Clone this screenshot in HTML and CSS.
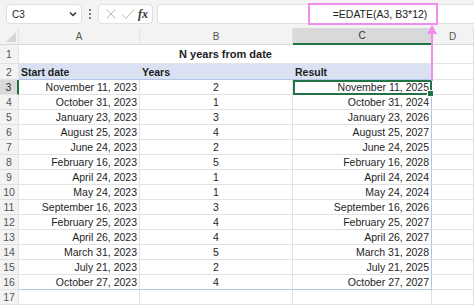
FILE: index.html
```html
<!DOCTYPE html>
<html>
<head>
<meta charset="utf-8">
<link rel="stylesheet" href="styles.css">
</head>
<body>
<div class="app">
  <div class="toolbar">
    <div class="namebox"><span>C3</span>
      <svg class="chev" width="8" height="6" viewBox="0 0 8 6"><path d="M1 1.5 L4 4.5 L7 1.5" fill="none" stroke="#333" stroke-width="1.4"/></svg>
    </div>
    <div class="dots"><i></i><i></i><i></i></div>
    <div class="fnbox">
      <svg width="12" height="12" viewBox="0 0 12 12"><path d="M1.5 1.5 L10.5 10.5 M10.5 1.5 L1.5 10.5" stroke="#b8b8b8" stroke-width="1"/></svg>
      <svg width="14" height="12" viewBox="0 0 14 12"><path d="M1 6.5 L5 10.5 L13 1.5" fill="none" stroke="#b8b8b8" stroke-width="1"/></svg>
      <span class="fx">fx</span>
    </div>
    <div class="formula">
      <div class="fhl">=EDATE(A3, B3*12)</div>
    </div>
  </div>
  <div class="sheet">
    <div class="hd corner"><svg width="10" height="10" viewBox="0 0 10 10"><path d="M10 0 L10 10 L0 10 Z" fill="#d6d6d6"/></svg></div>
    <div class="hd col">A</div>
    <div class="hd col">B</div>
    <div class="hd col sel">C</div>
    <div class="hd col">D</div>

    <div class="rh">1</div>
    <div class="title">N years from date</div>
    <div class="c"></div>

    <div class="rh">2</div>
    <div class="c th">Start date</div>
    <div class="c th">Years</div>
    <div class="c th last">Result</div>
    <div class="c"></div>

    <div class="rh sel">3</div>
    <div class="c d">November 11, 2023</div>
    <div class="c n">2</div>
    <div class="c d last cur">November 11, 2025</div>
    <div class="c"></div>

    <div class="rh">4</div>
    <div class="c d">October 31, 2023</div>
    <div class="c n">1</div>
    <div class="c d last">October 31, 2024</div>
    <div class="c"></div>

    <div class="rh">5</div>
    <div class="c d">January 23, 2023</div>
    <div class="c n">3</div>
    <div class="c d last">January 23, 2026</div>
    <div class="c"></div>

    <div class="rh">6</div>
    <div class="c d">August 25, 2023</div>
    <div class="c n">4</div>
    <div class="c d last">August 25, 2027</div>
    <div class="c"></div>

    <div class="rh">7</div>
    <div class="c d">June 24, 2023</div>
    <div class="c n">2</div>
    <div class="c d last">June 24, 2025</div>
    <div class="c"></div>

    <div class="rh">8</div>
    <div class="c d">February 16, 2023</div>
    <div class="c n">5</div>
    <div class="c d last">February 16, 2028</div>
    <div class="c"></div>

    <div class="rh">9</div>
    <div class="c d">April 24, 2023</div>
    <div class="c n">1</div>
    <div class="c d last">April 24, 2024</div>
    <div class="c"></div>

    <div class="rh">10</div>
    <div class="c d">May 24, 2023</div>
    <div class="c n">1</div>
    <div class="c d last">May 24, 2024</div>
    <div class="c"></div>

    <div class="rh">11</div>
    <div class="c d">September 16, 2023</div>
    <div class="c n">3</div>
    <div class="c d last">September 16, 2026</div>
    <div class="c"></div>

    <div class="rh">12</div>
    <div class="c d">February 25, 2023</div>
    <div class="c n">4</div>
    <div class="c d last">February 25, 2027</div>
    <div class="c"></div>

    <div class="rh">13</div>
    <div class="c d">April 26, 2023</div>
    <div class="c n">4</div>
    <div class="c d last">April 26, 2027</div>
    <div class="c"></div>

    <div class="rh">14</div>
    <div class="c d">March 31, 2023</div>
    <div class="c n">5</div>
    <div class="c d last">March 31, 2028</div>
    <div class="c"></div>

    <div class="rh">15</div>
    <div class="c d">July 21, 2023</div>
    <div class="c n">2</div>
    <div class="c d last">July 21, 2025</div>
    <div class="c"></div>

    <div class="rh">16</div>
    <div class="c d bot">October 27, 2023</div>
    <div class="c n bot">4</div>
    <div class="c d last bot">October 27, 2027</div>
    <div class="c"></div>

    <div class="rh">17</div>
    <div class="c"></div>
    <div class="c"></div>
    <div class="c"></div>
    <div class="c"></div>
  </div>
  <svg class="arrow" width="14" height="56" viewBox="0 0 14 56"><path d="M7 8 L7 56" stroke="#f08ef0" stroke-width="2"/><path d="M7 0 L12 9 L2 9 Z" fill="#f08ef0"/></svg>
</div>
</body>
</html>
```
FILE: styles.css
```css
* { box-sizing: border-box; }
body { margin: 0; background: #fff; font-family: "Liberation Sans", Arial, sans-serif; overflow: hidden; }
.app { width: 474px; height: 305px; overflow: hidden; position: relative; }
.toolbar { height: 28px; background: #f3f3f3; display: flex; align-items: center; padding: 0 0 0 6px; }
.namebox { width: 76px; height: 20px; background: #fff; border: 1px solid #e0e0e0; border-radius: 4px; display: flex; align-items: center; justify-content: space-between; padding: 0 4px 0 5px; font-size: 10px; color: #222; }
.chev { display: block; }
.dots { width: 16px; display: flex; flex-direction: column; align-items: center; gap: 2px; }
.dots i { width: 2px; height: 2px; background: #555; display: block; border-radius: 1px; }
.fnbox { width: 55px; height: 20px; background: #fff; border: 1px solid #e0e0e0; border-radius: 4px; display: flex; align-items: center; justify-content: space-between; padding: 0 4px 0 6px; }
.fnbox svg { display: block; }
.fx { font-family: "Liberation Serif", serif; font-style: italic; font-weight: bold; font-size: 12px; color: #333; }
.formula { flex: 1; margin-left: 4px; height: 20px; background: #fff; border: 1px solid #e0e0e0; border-right: none; border-radius: 4px 0 0 4px; position: relative; }
.fhl { position: absolute; left: 150px; top: -2px; width: 130px; height: 22px; border: 2px solid #f08ef0; background: #fff; font-size: 10.5px; color: #222; display: flex; align-items: center; justify-content: center; padding-left: 14px; }
.sheet { display: grid; grid-template-columns: 19px 121px 153px 139px 1fr; grid-template-rows: 17px 19px 16px; grid-auto-rows: 15px; font-size: 10.5px; color: #1e1e1e; }
.hd { background: #f3f3f3; border-right: 1px solid #e2e2e2; border-bottom: 1px solid #d8d8d8; font-size: 10px; color: #555; display: flex; align-items: center; justify-content: center; }
.corner { align-items: flex-end; justify-content: flex-end; padding: 0 2px 2px 0; }
.corner svg { display: block; }
.hd.sel { background: #d9d9d9; border-bottom: 2px solid #217346; color: #333; }
.rh { background: #f3f3f3; border-right: 1px solid #e2e2e2; border-bottom: 1px solid #e2e2e2; font-size: 10.5px; color: #555; display: flex; align-items: center; justify-content: center; }
.rh.sel { background: #d9d9d9; border-right: 2px solid #217346; color: #333; }
.title { grid-column: 2 / span 3; font-weight: bold; font-size: 11px; text-align: center; display: flex; align-items: center; justify-content: center; border-bottom: 1px solid #e2e2e2; }
.c { border-right: 1px solid #e2e2e2; border-bottom: 1px solid #e2e2e2; display: flex; align-items: center; padding: 0 2px; white-space: nowrap; }
.th { background: #d9e1f2; font-weight: bold; border-right-color: #d9e1f2; border-bottom-color: #b4c6e7; }
.th.last { border-right-color: #b4c6e7; }
.d { justify-content: flex-end; }
.n { justify-content: center; }
.c.last { border-right-color: #b4c6e7; }
.c.bot { border-bottom-color: #b4c6e7; }
.c.cur { position: relative; outline: 2px solid #217346; outline-offset: -2px; }
.c.cur::after { content: ""; position: absolute; right: -3px; bottom: -3px; width: 5px; height: 5px; background: #217346; border: 1px solid #fff; }
.arrow { position: absolute; left: 425px; top: 25px; }
```
